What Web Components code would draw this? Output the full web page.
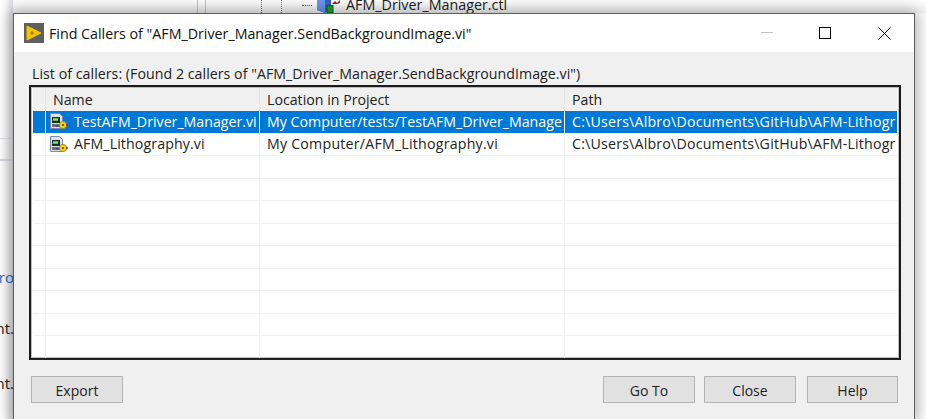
<!DOCTYPE html>
<html><head><meta charset="utf-8">
<style>
html,body{margin:0;padding:0;height:100%;overflow:hidden;background:#fff}
body{font-family:"Open Sans","Noto Sans",sans-serif;color:#1a1a1a}
</style></head><body>
<template id="t-desktop">
<style>
:host{display:block;position:relative;width:926px;height:419px;overflow:hidden;background:#fff}
.tree{position:absolute;left:0;top:0;width:926px;height:13px;background:linear-gradient(#fff,#f4f4f4)}
.v{position:absolute;top:0;height:13px;width:1px;background:#c4c4c4}
.d{position:absolute;top:0;height:13px;width:0;border-left:1px dotted #777}
.ctl{position:absolute;left:346px;top:-4px;font:14.3px/18px "Open Sans",sans-serif;color:#222;white-space:nowrap}
.ico{position:absolute;left:316px;top:0}
.dash{position:absolute;left:302px;top:5px;width:10px;border-top:1px dotted #555}
.left{position:absolute;left:0;top:0;width:13px;height:419px;background:linear-gradient(90deg,#fff 0,#fcfcfc 4px,#dcdde0 13px)}
.line{position:absolute;left:0;width:13px;height:1px;background:#dcdce6}
.band{position:absolute;left:0;width:13px;height:2px;background:#d6d6de}
.frag{position:absolute;right:-1px;font:15px/18px "Open Sans",sans-serif;white-space:nowrap;color:#222}
.lw{position:absolute;left:0;top:0;width:13px;height:419px;overflow:hidden}
</style>
<div class="tree">
<div class="v" style="left:197px"></div><div class="v" style="left:205px"></div>
<div class="d" style="left:261px"></div><div class="d" style="left:281px"></div>
<div class="dash"></div>
<svg class="ico" width="26" height="13" viewBox="0 0 26 13"><path d="M1 0h14v9l-6 4-8-3z" fill="#2f62c9"/><path d="M1 0h8v13l-8-3z" fill="#6d94e6"/><rect x="11" y="5.500" width="6" height="7.500" fill="#1ca02c" stroke="#0a5f17"/><path d="M16 4l3-3 2 2 3-3v3l-3 1z" fill="#a52020"/></svg>
<span class="ctl">AFM_Driver_Manager.ctl</span>
</div>
<div class="left"></div>
<div class="line" style="top:138px"></div>
<div class="band" style="top:159px"></div>
<div class="lw">
<span class="frag" style="top:268px;color:#2a6fc0">ro</span>
<span class="frag" style="top:319px">nt.</span>
<span class="frag" style="top:374px">nt.</span>
</div>
<slot></slot>
</template>

<template id="t-window">
<style>
:host{position:absolute;left:13px;top:13px;width:900px;height:406px;box-sizing:content-box;display:flex;flex-direction:column;
background:#f0f0f0;border:1px solid #5e5e5e;border-bottom:0;box-shadow:0 0 14px 3px rgba(0,0,0,.3)}
.bar{height:38px;flex:none;background:#fff;display:flex;align-items:center;padding-left:10px;gap:5px}
.title{flex:1;font-size:14.25px;color:#111;white-space:nowrap}
.ctrls{display:flex;align-items:center;flex:none;padding-right:23px;gap:46px}
.body{flex:1;min-height:0;display:flex;flex-direction:column;padding:0 13px 0 15px}
</style>
<div class="bar">
<slot name="icon"></slot>
<div class="title"><slot name="title"></slot></div>
<div class="ctrls">
<svg width="13" height="13" viewBox="0 0 13 13"><path d="M1 5.500h12" stroke="#c4c4c4"/></svg>
<svg width="13" height="13" viewBox="0 0 13 13"><rect x=".5" y=".5" width="11" height="11" fill="none" stroke="#000"/></svg>
<svg width="13" height="13" viewBox="0 0 13 13"><path d="M.5.5l12 12M12.5.5l-12 12" stroke="#000"/></svg>
</div>
</div>
<div class="body"><slot></slot></div>
</template>

<template id="t-list">
<style>
:host{display:flex;flex-direction:column;flex:none}
.cap{height:33px;flex:none;display:flex;align-items:flex-end;padding:0 0 2px 3px;font-size:14.2px;letter-spacing:.035px;color:#222;white-space:nowrap;box-sizing:border-box}
.frame{height:275px;box-sizing:border-box;border:2px solid #1a1a1a;border-bottom-color:#222;background:#fff;padding:1px 2px 0 2px;box-shadow:inset 0 0 0 1px #bdbdbd;display:flex;flex-direction:column;overflow:hidden}
</style>
<div class="cap"><slot name="caption"></slot></div>
<div class="frame"><slot></slot></div>
</template>

<template id="t-row">
<style>
:host{display:grid;grid-template-columns:13px 214px 305px 331px;height:22.5px;box-sizing:border-box;border-bottom:1px solid #f0f0f0;font-size:14.2px;color:#222;flex:none}
:host([head]){background:#f0f0f0;height:23px;border-bottom:0}
:host([selected]){background:#0078d7;color:#fff;border-bottom-color:#fff}
.c{border-right:1px solid #f0f0f0;overflow:hidden;white-space:nowrap;display:flex;align-items:center;padding:0 0 1px 7px;box-sizing:border-box;min-width:0}
.c.n{padding-left:3px;gap:6px}
:host([head]) .c{border-right-color:#e4e4e4}
:host([head]) .c.n{padding-left:7px}
:host([selected]) .c{border-right-color:#fff}
.c:first-child{padding:0}
.c:last-child{border-right:0}
.t{flex:none}
</style>
<div class="c"></div>
<div class="c n"><slot name="icon"></slot><span class="t"><slot name="name"></slot></span></div>
<div class="c"><span class="t"><slot name="loc"></slot></span></div>
<div class="c"><span class="t"><slot name="path"></slot></span></div>
</template>

<template id="t-actions">
<style>
:host{display:flex;flex:none;padding:16px 3px 0 2px}
.s{flex:1}
</style>
<slot name="left"></slot><div class="s"></div><slot></slot>
</template>

<template id="t-btn">
<style>
:host{display:flex;align-items:center;justify-content:center;width:92px;height:27px;box-sizing:border-box;padding-top:1px;background:#e1e1e1;border:1px solid #b4b4b4;font-size:14px;color:#222}
:host(.m){margin-left:9px}
:host(.l){margin-left:11px;width:91px}
</style>
<slot></slot>
</template>

<template id="t-vi">
<style>:host{display:inline-flex;flex:none;width:19px;height:18px}</style>
<svg width="19" height="18" viewBox="0 0 19 18">
<path d="M1.500 1.500h9l3 3v12h-12z" fill="#dfe0ea" stroke="#7d88b8"/>
<rect x="3" y="5" width="8" height="6" fill="#16301c"/>
<path d="M4 9l1-3 1 3 1-3 1 3 1-3" stroke="#7be07b" fill="none" stroke-width="1"/>
<rect x="3" y="12" width="8" height="3" fill="#6e6e6e"/>
<path d="M7 14h5" stroke="#2a4bd0" stroke-width="1.400"/>
<circle cx="14" cy="13" r="3.600" fill="#f4d41e" stroke="#a08a10"/>
<circle cx="14" cy="13" r="1.100" fill="#5a4a00"/>
<path d="M17 13h2" stroke="#d01010" stroke-width="1.400"/>
</svg>
</template>

<template id="t-logo">
<style>:host{display:inline-flex;flex:none;width:20px;height:20px}</style>
<svg width="20" height="20" viewBox="0 0 20 20"><rect width="20" height="20" fill="#5f5f5f"/><path d="M3 3L17 10 3 17z" fill="#f5c400" stroke="#f5c400" stroke-linejoin="round"/><path d="M6 10h4M8 8v4" stroke="#8a7000" stroke-width="1"/></svg>
</template>

<app-desktop>
<app-window>
<app-logo slot="icon"></app-logo>
<span slot="title">Find Callers of "AFM_Driver_Manager.SendBackgroundImage.vi"</span>
<app-list>
<span slot="caption">List of callers: (Found 2 callers of "AFM_Driver_Manager.SendBackgroundImage.vi")</span>
<app-row head><span slot="name">Name</span><span slot="loc">Location in Project</span><span slot="path">Path</span></app-row>
<app-row selected><app-vi slot="icon"></app-vi><span slot="name">TestAFM_Driver_Manager.vi</span><span slot="loc">My Computer/tests/TestAFM_Driver_Manage</span><span slot="path" style="letter-spacing:.2px">C:\Users\Albro\Documents\GitHub\AFM-Lithogr</span></app-row>
<app-row><app-vi slot="icon"></app-vi><span slot="name" style="letter-spacing:.1px">AFM_Lithography.vi</span><span slot="loc" style="letter-spacing:.22px">My Computer/AFM_Lithography.vi</span><span slot="path" style="letter-spacing:.2px">C:\Users\Albro\Documents\GitHub\AFM-Lithogr</span></app-row>
<app-row></app-row><app-row></app-row><app-row></app-row><app-row></app-row><app-row></app-row><app-row></app-row><app-row></app-row><app-row></app-row><app-row></app-row>
</app-list>
<app-actions>
<app-btn slot="left">Export</app-btn>
<app-btn>Go To</app-btn><app-btn class="m">Close</app-btn><app-btn class="l">Help</app-btn>
</app-actions>
</app-window>
</app-desktop>
<script>
for (const [tag,id] of [['app-desktop','t-desktop'],['app-window','t-window'],['app-list','t-list'],['app-row','t-row'],['app-actions','t-actions'],['app-btn','t-btn'],['app-vi','t-vi'],['app-logo','t-logo']]) {
  customElements.define(tag, class extends HTMLElement {
    constructor(){super();this.attachShadow({mode:'open'}).appendChild(document.getElementById(id).content.cloneNode(true));}
  });
}
</script>
</body></html>
